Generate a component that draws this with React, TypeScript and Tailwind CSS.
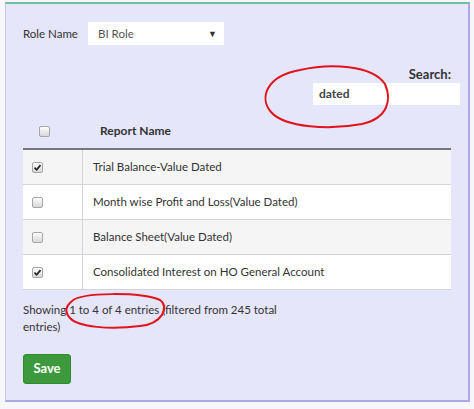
import React from 'react'

const font = { fontFamily: "Lato, 'Open Sans', sans-serif" }

const rows = [
  { name: 'Trial Balance-Value Dated', checked: true },
  { name: 'Month wise Profit and Loss(Value Dated)', checked: false },
  { name: 'Balance Sheet(Value Dated)', checked: false },
  { name: 'Consolidated Interest on HO General Account', checked: true },
]

function Check({ checked }: { checked: boolean }) {
  return (
    <span className="inline-flex w-[11px] h-[11px] items-center justify-center rounded-[2px] border border-[#a6a6a6] bg-gradient-to-b from-[#fdfdfd] to-[#d8d8d8]">
      {checked && (
        <svg viewBox="0 0 12 12" className="w-[9px] h-[9px]">
          <path d="M2 6.2 L4.8 9 L10 2.8" fill="none" stroke="#222" strokeWidth="2.2" />
        </svg>
      )}
    </span>
  )
}

export default function App() {
  return (
    <div className="w-[474px] h-[409px] bg-[#f7f7fb] pt-[2px] pl-[5px] relative" style={font}>
      <div className="w-[465px] h-[400px] bg-[#e6e6fa] border-t-2 border-t-[#6cbf9f] border-l border-r-2 border-b-2 border-l-[#c8c8ee] border-r-[#a9a9e6] border-b-[#a9a9e6] px-[17px] text-[11.5px] text-[#333]">
        {/* 角色选择 */}
        <div className="flex items-center pt-[18px]">
          <span className="w-[65px]">Role Name</span>
          <div className="w-[136px] h-[23px] bg-white flex items-center justify-between pl-[10px] pr-[7px] text-[#555]">
            <span>BI Role</span>
            <span className="text-[9px] text-[#333]">▼</span>
          </div>
        </div>

        {/* 搜索 */}
        <div className="flex flex-col items-end mr-[-9px] mt-[20px]">
          <span className="font-bold text-[13px] leading-[18px] text-[#333] pr-[9px]">Search:</span>
          <div className="w-[147px] h-[22px] bg-white px-[6px] flex items-center font-bold text-[12px] text-[#444]">
            dated
          </div>
        </div>

        {/* 报表列表 */}
        <div className="w-[428px] mt-[9px]">
          <div className="flex items-center h-[36px] border-b-2 border-[#777]">
            <div className="w-[60px] flex pl-[16px]">
              <Check checked={false} />
            </div>
            <div className="pl-[17px] font-bold text-[12px] text-[#333]">Report Name</div>
          </div>
          {rows.map((r, i) => (
            <div
              key={r.name}
              className={`flex h-[35px] border-b border-[#d4d4d4] ${i % 2 === 0 ? 'bg-[#f5f5f5]' : 'bg-white'}`}
            >
              <div className="w-[60px] flex items-center pl-[9px] border-r border-[#d4d4d4]">
                <Check checked={r.checked} />
              </div>
              <div className="flex items-center pl-[10px] text-[#333]">{r.name}</div>
            </div>
          ))}
        </div>

        <div className="w-[262px] mt-[11px] leading-[17px] text-[#333]">
          Showing 1 to 4 of 4 entries (filtered from 245 total entries)
        </div>

        <button className="mt-[19px] w-[48px] h-[30px] rounded-[3px] bg-[#3c9a3c] border border-[#2f8a2f] text-white font-bold text-[13px]">
          Save
        </button>
      </div>

      {/* 红圈标注 */}
      <svg className="absolute left-0 top-0 pointer-events-none" width="474" height="409">
        <path
          d="M300 70 C330 63 372 65 385 84 C392 100 388 118 362 124 C330 130 285 128 271 112 C259 98 266 76 300 70"
          fill="none"
          stroke="#e0141c"
          strokeWidth="2"
        />
        <path
          d="M72 301 C82 292 140 292 160 300 C170 307 162 324 140 326 C110 330 78 327 70 318 C64 312 66 306 72 301"
          fill="none"
          stroke="#e0141c"
          strokeWidth="2"
        />
      </svg>
    </div>
  )
}
